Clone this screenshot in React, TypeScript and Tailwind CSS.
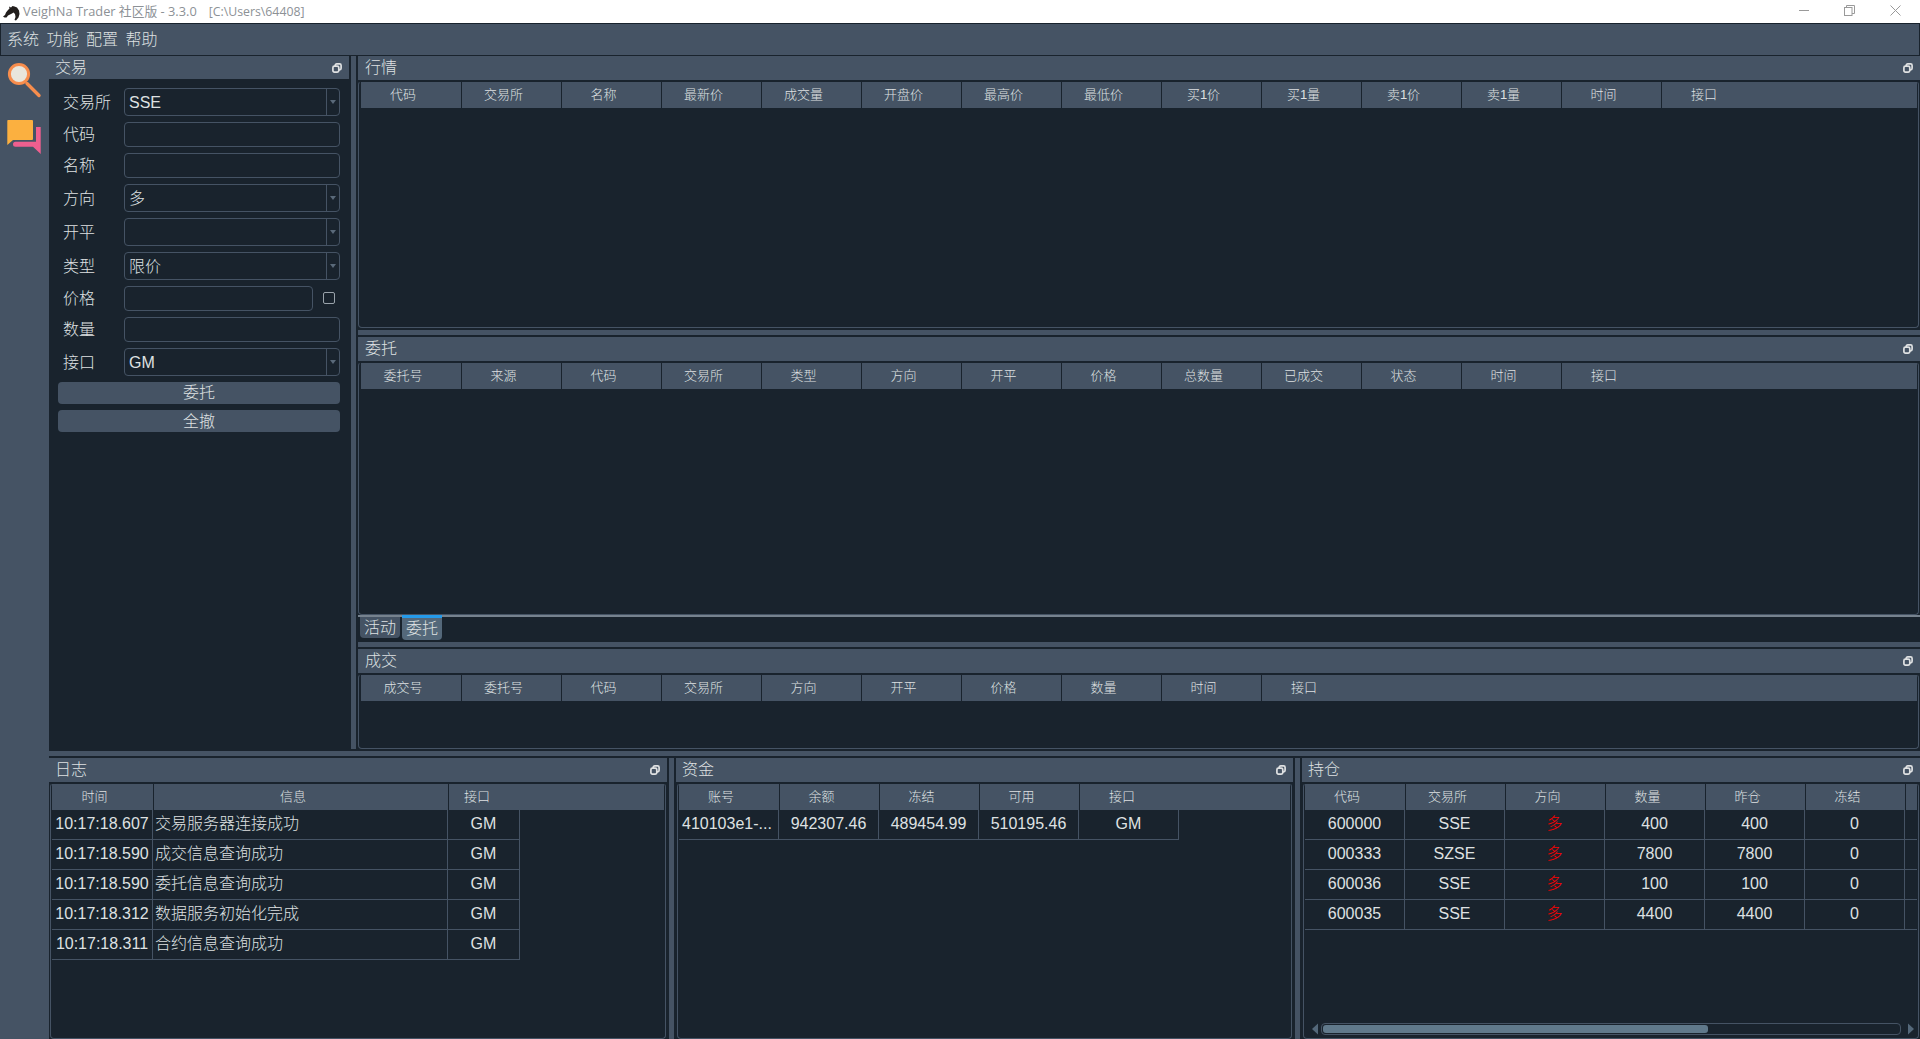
import React from "react";

const FONT = "font-['Liberation_Sans','Noto_Sans_CJK_SC',sans-serif]";

function FloatIcon() {
  return (
    <svg width="10" height="10" viewBox="0 0 10 10" fill="none" stroke="#DFE1E2" strokeWidth="1.7" className="shrink-0">
      <rect x="3.2" y="0.9" width="5.900" height="5.900" rx="1.500" />
      <rect x="0.900" y="3.200" width="5.900" height="5.900" rx="1.500" fill="#455364" />
    </svg>
  );
}

function Title({ text, h = "h-[24px]", pl = "pl-[7px]" }: { text: string; h?: string; pl?: string }) {
  return (
    <div className={`${h} ${pl} shrink-0 bg-[#455364] flex items-center justify-between pr-[7px] text-[16px]`}>
      <span>{text}</span>
      <FloatIcon />
    </div>
  );
}

type Col = { label: string; w: string };

function cols(labels: string[]): Col[] {
  return labels.map((label, i) => ({ label, w: i === 0 ? "w-[101px]" : "w-[100px]" }));
}

function Header({ columns, lastBorder = false }: { columns: Col[]; lastBorder?: boolean }) {
  return (
    <div className="h-[26px] shrink-0 bg-[#455364] flex text-[13px]">
      {columns.map((c, i) => (
        <div
          key={i}
          className={`${c.w} shrink-0 flex items-center justify-center pr-4 pb-[2px] ${
            i < columns.length - 1 || lastBorder ? "border-r border-[#19232D]" : ""
          }`}
        >
          {c.label}
        </div>
      ))}
    </div>
  );
}

type Cell = { text: string; w: string; left?: string; red?: boolean; last?: boolean };

function Row({ cells }: { cells: Cell[] }) {
  return (
    <div className="flex w-max h-[30px] border-b border-[#455364] text-[16px]">
      {cells.map((c, i) => (
        <div
          key={i}
          className={`${c.w} shrink-0 flex items-center pb-[2px] ${c.left ? `justify-start ${c.left}` : "justify-center"} ${
            c.last ? "" : "border-r border-[#455364]"
          } ${c.red ? "text-[#ff0000]" : ""}`}
        >
          {c.text}
        </div>
      ))}
    </div>
  );
}

function TopFrame({ children }: { children?: React.ReactNode }) {
  return (
    <div className="flex-1 min-h-0 mt-[1px] mr-[1px] border border-[#455364] border-t-[#19232D] rounded-[4px] pl-[2px] pr-[1px] flex flex-col">
      {children}
    </div>
  );
}

function BottomFrame({ children }: { children?: React.ReactNode }) {
  return (
    <div className="flex-1 min-h-0 mt-[1px] mx-[1px] border border-[#455364] border-t-[#19232D] rounded-[4px] px-[1px] flex flex-col">
      {children}
    </div>
  );
}

function VSep() {
  return (
    <div className="w-[9px] shrink-0 px-[2px]">
      <div className="w-full h-full bg-[#455364]" />
    </div>
  );
}

function HSep() {
  return (
    <div className="h-[9px] shrink-0 py-[2px]">
      <div className="w-full h-full bg-[#455364]" />
    </div>
  );
}

function Label({ text, low }: { text: string; low?: boolean }) {
  return <div className={`w-[66px] shrink-0 pl-[5px] text-[16px] ${low ? "pt-[1px]" : ""}`}>{text}</div>;
}

function ComboRow({ label, value }: { label: string; value: string }) {
  return (
    <div className="flex items-center h-[28px]">
      <Label text={label} low />
      <div className="flex-1 h-full flex items-center border border-[#455364] rounded-[4px] text-[16px]">
        <div className="flex-1 pl-[4px] pt-[1px]">{value}</div>
        <div className="w-[13px] h-full border-l border-[#455364] shrink-0 flex items-center">
          <svg width="12" height="6" viewBox="0 0 12 6" className="shrink-0">
            <path d="M3 1h6L6 5z" fill="#5A6A7A" />
          </svg>
        </div>
      </div>
    </div>
  );
}

function InputRow({ label, check }: { label: string; check?: boolean }) {
  return (
    <div className="flex items-center h-[25px]">
      <Label text={label} />
      <div className={`${check ? "w-[189px]" : "flex-1"} h-full border border-[#455364] rounded-[4px]`} />
      {check && <div className="ml-[10px] mb-[1px] w-[12px] h-[12px] border-[1.5px] border-[#9AA3AB] rounded-[2px]" />}
    </div>
  );
}

function TradeForm() {
  return (
    <div className="flex-1 pt-[9px] pl-[9px] pr-[9px] flex flex-col gap-[6px]">
      <ComboRow label="交易所" value="SSE" />
      <InputRow label="代码" />
      <InputRow label="名称" />
      <ComboRow label="方向" value="多" />
      <ComboRow label="开平" value="" />
      <ComboRow label="类型" value="限价" />
      <InputRow label="价格" check />
      <InputRow label="数量" />
      <ComboRow label="接口" value="GM" />
      <div className="h-[22px] bg-[#455364] rounded-[4px] flex items-center justify-center text-[16px]">委托</div>
      <div className="h-[22px] pt-[1px] bg-[#455364] rounded-[4px] flex items-center justify-center text-[16px]">全撤</div>
    </div>
  );
}

function Toolbar() {
  return (
    <div className="w-[49px] shrink-0 bg-[#455364] flex flex-col">
      <svg width="49" height="48" viewBox="0 0 49 48" className="shrink-0">
        <line x1="27" y1="27.5" x2="39" y2="39.5" stroke="#F78D4D" strokeWidth="3.4" strokeLinecap="round" />
        <circle cx="19" cy="18" r="9.6" fill="#E9E6DC" stroke="#F78D4D" strokeWidth="3" />
      </svg>
      <svg width="49" height="48" viewBox="0 0 49 48" className="mt-[8px] shrink-0">
        <path d="M36 15h4.7v27L33 34.7H15.5a2 2 0 0 1 0-5H36z" fill="#EF5F8F" />
        <path d="M8 8h24a1 1 0 0 1 1 1v18a1 1 0 0 1-1 1H13l-5.700 5V9a1 1 0 0 1 .7-1z" fill="#FBB040" />
      </svg>
    </div>
  );
}

const logData = [
  ["10:17:18.607", "交易服务器连接成功"],
  ["10:17:18.590", "成交信息查询成功"],
  ["10:17:18.590", "委托信息查询成功"],
  ["10:17:18.312", "数据服务初始化完成"],
  ["10:17:18.311", "合约信息查询成功"],
];

const posData = [
  ["600000", "SSE", "400", "400"],
  ["000333", "SZSE", "7800", "7800"],
  ["600036", "SSE", "100", "100"],
  ["600035", "SSE", "4400", "4400"],
];

function HScroll() {
  return (
    <div className="mt-auto mb-[3px] h-[12px] shrink-0 flex items-center pl-[7px]">
      <svg width="6" height="12" viewBox="0 0 6 12" className="shrink-0">
        <path d="M6 0.500v11L0 6z" fill="#54687A" />
      </svg>
      <div className="ml-[3px] w-[580px] h-[12px] border border-[#455364] rounded-[4px] p-[1px] shrink-0">
        <div className="w-[385px] h-full bg-[#60798B] rounded-[3px]" />
      </div>
      <svg width="6" height="12" viewBox="0 0 6 12" className="ml-[7px] shrink-0">
        <path d="M0 0.500v11L6 6z" fill="#54687A" />
      </svg>
    </div>
  );
}

export default function App() {
  return (
    <div className={`${FONT} font-light w-[1920px] h-[1039px] overflow-hidden bg-[#19232D] text-[#DFE1E2] flex flex-col leading-none`}>
      {/* window title bar */}
      <div className="h-[23px] shrink-0 bg-white flex items-center relative">
        <svg width="18" height="18" viewBox="0 0 18 18" className="ml-[2px] shrink-0">
          <path
            d="M1 13.500 L3 12 L4 9.500 L6 7 L7.500 5.500 L7 3.500 L9 4.500 L10.500 3 L12.500 3.500 L15 4.500 L17 7.500 L17.500 11 L16.500 14.500 L14 17.500 L12.500 17 L13.500 14 L13 11 L11.500 9.500 L10 10.500 L8 11.500 L6 12.500 L4.500 14.500 L2.500 14.500 Z"
            fill="#221E1C"
          />
        </svg>
        <div className="ml-[3px] flex items-baseline text-[12.800px] text-[#8C9196] font-normal font-['Open_Sans','Noto_Sans_CJK_SC',sans-serif]">
          <span>VeighNa Trader 社区版 - 3.3.0</span>
          <span className="ml-[12px] text-[12.300px]">[C:\Users\64408]</span>
        </div>
        <div className="ml-auto mb-[3px] flex items-center">
          <svg width="10" height="10" viewBox="0 0 10 10" className="mr-[35px]">
            <line x1="0" y1="5.500" x2="10" y2="5.500" stroke="#9A9A9A" />
          </svg>
          <svg width="11" height="11" viewBox="0 0 11 11" fill="none" stroke="#9A9A9A" className="mr-[35px]">
            <rect x="0.500" y="2.500" width="7.500" height="8" />
            <path d="M2.500 2.500V0.500H10.500V8.500H8" />
          </svg>
          <svg width="11" height="11" viewBox="0 0 11 11" fill="none" stroke="#9A9A9A" className="mr-[19px]">
            <path d="M0.500 0.500L10.500 10.500M10.500 0.500L0.500 10.500" />
          </svg>
        </div>
      </div>

      {/* menu bar */}
      <div className="h-[33px] shrink-0 bg-[#455364] border border-[#19232D] flex items-center gap-[7.500px] pl-[6px] text-[16px]">
        <span>系统</span>
        <span>功能</span>
        <span>配置</span>
        <span>帮助</span>
      </div>

      <div className="flex-1 min-h-0 flex">
        <Toolbar />
        <div className="flex-1 min-w-0 flex flex-col">
          {/* upper area */}
          <div className="h-[693px] shrink-0 flex">
            <div className="w-[300px] shrink-0 flex flex-col">
              <Title text="交易" h="h-[23px]" pl="pl-[6px]" />
              <TradeForm />
            </div>
            <VSep />
            <div className="flex-1 min-w-0 flex flex-col">
              <div className="h-[272px] shrink-0 flex flex-col">
                <Title text="行情" />
                <TopFrame>
                  <Header
                    columns={cols(["代码", "交易所", "名称", "最新价", "成交量", "开盘价", "最高价", "最低价", "买1价", "买1量", "卖1价", "卖1量", "时间", "接口"])}
                  />
                </TopFrame>
              </div>
              <HSep />
              <div className="h-[278px] shrink-0 flex flex-col">
                <Title text="委托" />
                <TopFrame>
                  <Header
                    columns={cols(["委托号", "来源", "代码", "交易所", "类型", "方向", "开平", "价格", "总数量", "已成交", "状态", "时间", "接口"])}
                  />
                </TopFrame>
              </div>
              <div className="h-[25px] shrink-0 border-t-2 border-[#76828E] flex gap-[2px] pl-[2px] text-[16px]">
                <div className="w-[40px] h-[21px] bg-[#455364] rounded-b-[4px] flex items-center justify-center">活动</div>
                <div className="w-[40px] h-[25px] -mt-[2px] bg-[#54687A] border-t-[3px] border-[#259AE9] rounded-b-[4px] flex items-center justify-center">委托</div>
              </div>
              <HSep />
              <div className="flex-1 min-h-0 flex flex-col">
                <Title text="成交" />
                <TopFrame>
                  <Header columns={cols(["成交号", "委托号", "代码", "交易所", "方向", "开平", "价格", "数量", "时间", "接口"])} />
                </TopFrame>
              </div>
            </div>
          </div>

          <HSep />

          {/* lower area */}
          <div className="flex-1 min-h-0 flex">
            <div className="w-[618px] shrink-0 flex flex-col">
              <Title text="日志" pl="pl-[6px]" />
              <BottomFrame>
                <Header
                  columns={[
                    { label: "时间", w: "w-[102px]" },
                    { label: "信息", w: "w-[295px]" },
                    { label: "接口", w: "w-[72px]" },
                  ]}
                />
                {logData.map((r, i) => (
                  <Row
                    key={i}
                    cells={[
                      { text: r[0], w: "w-[101px]" },
                      { text: r[1], w: "w-[295px]", left: "pl-[2px]" },
                      { text: "GM", w: "w-[72px]" },
                    ]}
                  />
                ))}
              </BottomFrame>
            </div>
            <VSep />
            <div className="w-[617px] shrink-0 flex flex-col">
              <Title text="资金" pl="pl-[6px]" />
              <BottomFrame>
                <Header columns={cols(["账号", "余额", "冻结", "可用", "接口"])} />
                <Row
                  cells={[
                    { text: "410103e1-...", w: "w-[100px]", left: "pl-[3px]" },
                    { text: "942307.46", w: "w-[100px]" },
                    { text: "489454.99", w: "w-[100px]" },
                    { text: "510195.46", w: "w-[100px]" },
                    { text: "GM", w: "w-[100px]" },
                  ]}
                />
              </BottomFrame>
            </div>
            <VSep />
            <div className="flex-1 min-w-0 flex flex-col">
              <Title text="持仓" pl="pl-[6px]" />
              <BottomFrame>
                <Header
                  lastBorder
                  columns={[
                    { label: "代码", w: "w-[101px]" },
                    { label: "交易所", w: "w-[100px]" },
                    { label: "方向", w: "w-[100px]" },
                    { label: "数量", w: "w-[100px]" },
                    { label: "昨仓", w: "w-[100px]" },
                    { label: "冻结", w: "w-[100px]" },
                  ]}
                />
                {posData.map((r, i) => (
                  <Row
                    key={i}
                    cells={[
                      { text: r[0], w: "w-[100px]" },
                      { text: r[1], w: "w-[100px]" },
                      { text: "多", w: "w-[100px]", red: true },
                      { text: r[2], w: "w-[100px]" },
                      { text: r[3], w: "w-[100px]" },
                      { text: "0", w: "w-[100px]" },
                      { text: "", w: "w-[12px]", last: true },
                    ]}
                  />
                ))}
                <HScroll />
              </BottomFrame>
            </div>
          </div>
        </div>
      </div>
    </div>
  );
}
